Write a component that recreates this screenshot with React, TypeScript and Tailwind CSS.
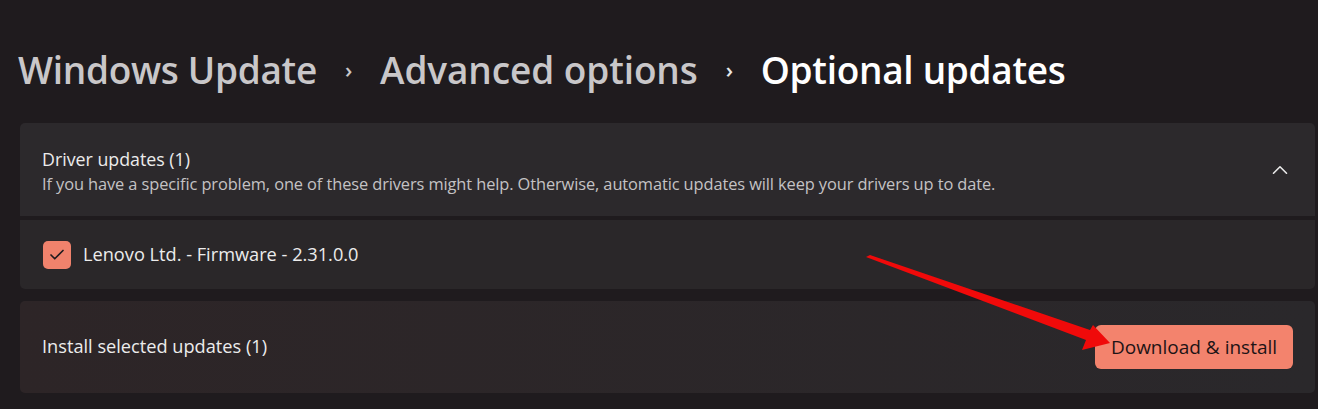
import { Check, ChevronUp } from 'lucide-react'

const FONT = { fontFamily: '"Open Sans", "Noto Sans", sans-serif' }

function Crumb() {
  return (
    <div className="flex items-center h-[123px] pl-[18px] pt-[16px] text-[37px] font-semibold tracking-[-0.3px]">
      <span className="text-[#c9c7c9]">Windows Update</span>
      <span className="mx-[28px] text-[22px] text-[#c9c7c9]">›</span>
      <span className="text-[#c9c7c9] tracking-[-0.1px]">Advanced options</span>
      <span className="mx-[28px] text-[22px] text-[#e6e6e6]">›</span>
      <span className="text-white">Optional updates</span>
    </div>
  )
}

function Arrow() {
  return (
    <svg className="absolute left-0 top-0 pointer-events-none" width="1318" height="409" viewBox="0 0 1318 409">
      <polygon points="866,257 870,255 1090,330 1093,325 1110,343 1082,350 1086,340" fill="#f00a0a" />
    </svg>
  )
}

export default function App() {
  return (
    <div className="relative w-[1318px] h-[409px] overflow-hidden bg-[#1f1b1e]" style={FONT}>
      <Crumb />
      <div className="mr-[3px] ml-[20px] flex flex-col">
        <div className="h-[93px] rounded-t-[5px] bg-[#2c292c] flex items-center pl-[22px] pr-[22px]">
          <div className="flex-1 pt-[2px]">
            <div className="text-[17.8px] leading-[25px] text-[#ececec]">Driver updates (1)</div>
            <div className="text-[16.4px] leading-[23px] text-[#c4c2c4] tracking-[-0.1px]">
              If you have a specific problem, one of these drivers might help. Otherwise, automatic updates will keep your drivers up to date.
            </div>
          </div>
          <ChevronUp className="w-[26px] h-[26px] text-[#e8e8e8]" strokeWidth={1.5} />
        </div>
        <div className="mt-[4px] h-[69px] rounded-b-[5px] bg-[#2a2729] flex items-center pl-[23px]">
          <span className="w-[28px] h-[28px] rounded-[5px] bg-[#f0826c] flex items-center justify-center">
            <Check className="w-[18px] h-[18px] text-[#1f1b1e]" strokeWidth={2.2} />
          </span>
          <span className="ml-[12px] text-[18.2px] text-[#ececec]">Lenovo Ltd. - Firmware - 2.31.0.0</span>
        </div>
        <div className="mt-[12px] h-[92px] rounded-[5px] bg-gradient-to-r from-[#2d2527] to-[#2a282b] flex items-center pl-[22px] pr-[22px]">
          <span className="flex-1 text-[18.2px] text-[#ececec]">Install selected updates (1)</span>
          <button type="button" className="w-[198px] h-[44px] rounded-[6px] bg-[#f3836d] text-[19px] text-[#1d1416]">
            Download &amp; install
          </button>
        </div>
      </div>
      <Arrow />
    </div>
  )
}
